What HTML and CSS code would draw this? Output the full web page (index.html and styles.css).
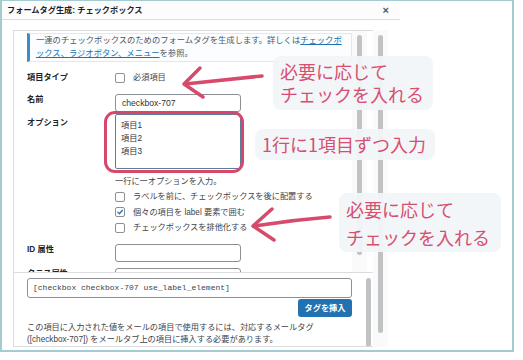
FILE: index.html
```html
<!DOCTYPE html>
<html lang="ja">
  <head>
    <meta charset="utf-8" />
    <title>フォームタグ生成: チェックボックス</title>
    <link rel="stylesheet" href="styles.css">
  </head>

  <body>
    <div class="page">
      <div class="frame">
        <!-- Dialog -->
        <div class="dialog">
          <div class="dialog-head">
            <span class="dialog-title">フォームタグ生成: チェックボックス</span>
            <span class="dialog-close">×</span>
          </div>
          <div class="dialog-body">
            <div class="panel">
              <div class="panel-main">
                <div class="panel-content">
                  <div class="notice">一連のチェックボックスのためのフォームタグを生成します。詳しくは<a href="#">チェックボックス、ラジオボタン、メニュー</a>を参照。</div>

                  <div class="row row-type">
                    <div class="row-label">項目タイプ</div>
                    <div class="row-field">
                      <label class="check"><span class="box"></span>必須項目</label>
                    </div>
                  </div>

                  <div class="row row-name">
                    <div class="row-label">名前</div>
                    <div class="row-field"><div class="input">checkbox-707</div></div>
                  </div>

                  <div class="row row-options">
                    <div class="row-label">オプション</div>
                    <div class="row-field">
                      <div class="textarea-wrap">
                        <div class="textarea">項目1<br />項目2<br />項目3</div>
                        <div class="mark"></div>
                      </div>
                      <div class="hint">一行に一オプションを入力。</div>
                      <label class="check check-row"><span class="box"></span>ラベルを前に、チェックボックスを後に配置する</label>
                      <label class="check check-row"><span class="box checked"><svg viewBox="0 0 10 10" width="10" height="10"><path d="M2.2 5.2 L4.2 7.2 L7.9 2.8" fill="none" stroke="#2271b1" stroke-width="1.6" stroke-linecap="round" stroke-linejoin="round"/></svg></span>個々の項目を label 要素で囲む</label>
                      <label class="check check-row"><span class="box"></span>チェックボックスを排他化する</label>
                    </div>
                  </div>

                  <div class="row row-id">
                    <div class="row-label">ID 属性</div>
                    <div class="row-field"><div class="input"></div></div>
                  </div>

                  <div class="row row-class">
                    <div class="row-label">クラス属性</div>
                    <div class="row-field"><div class="input"></div></div>
                  </div>
                </div>
                <div class="track track-main"><span class="thumb"></span></div>
              </div>

              <!-- insert box -->
              <div class="insert-box">
                <div class="insert-content">
                  <div class="code">[checkbox checkbox-707 use_label_element]</div>
                  <div class="insert-actions"><button class="insert-button">タグを挿入</button></div>
                  <p class="insert-note">この項目に入力された値をメールの項目で使用するには、対応するメールタグ<br />([checkbox-707]) をメールタブ上の項目に挿入する必要があります。</p>
                </div>
                <div class="track track-insert"><span class="thumb"></span></div>
              </div>
            </div>
            <div class="track track-outer"><span class="thumb"></span></div>
          </div>
        </div>
      </div>

      <!-- annotations -->
      <svg class="arrows" width="523" height="360" viewBox="0 0 523 360">
        <g fill="none" stroke="#d64b6c" stroke-width="3.5" stroke-linecap="round" stroke-linejoin="round">
          <path d="M262 76 Q225 80 185 84" />
          <path d="M200 68 L184 84 L203 97" />
          <path d="M330 217 Q292 220 254 226" />
          <path d="M272 209 L253 226 L274 240" />
        </g>
      </svg>
      <div class="note note-1">必要に応じて<br />チェックを入れる</div>
      <div class="note note-2">1行に1項目ずつ入力</div>
      <div class="note note-3">必要に応じて<br />チェックを入れる</div>
    </div>
  </body>
</html>
```

FILE: styles.css
```css
body {
  margin: 0;
  background: #fff;
  color: #3c434a;
  font-family: "Liberation Sans", "Noto Sans CJK JP", sans-serif;
  font-size: 8.2px;
  line-height: 13px;
}
.page {
  position: relative;
  width: 523px;
  height: 360px;
  overflow: hidden;
}
.frame {
  width: 510px;
  height: 349px;
  border: 2px solid #a3ccd0;
  border-top-width: 1px;
  display: flex;
}

/* dialog */
.dialog {
  width: 398px;
}
.dialog-head {
  height: 18px;
  border-bottom: 1px solid #dcdcde;
  display: flex;
  align-items: center;
  justify-content: space-between;
  padding: 0 11px 0 5px;
  background: #fcfcfc;
}
.dialog-title {
  font-weight: bold;
  color: #1d2327;
}
.dialog-close {
  font-size: 11px;
  font-weight: bold;
  color: #50575e;
}
.dialog-body {
  display: flex;
  padding: 10px 0 0 11px;
}

/* panel */
.panel {
  width: 359px;
  height: 315px;
  border: 1px solid #dcdcde;
  border-right: none;
  display: flex;
  flex-direction: column;
}
.panel-main {
  height: 241px;
  display: flex;
  overflow: hidden;
}
.panel-content {
  width: 338px;
  padding-left: 13px;
  box-sizing: border-box;
  flex-shrink: 0;
}
.track {
  display: flex;
  justify-content: center;
  flex-shrink: 0;
}
.thumb {
  display: block;
  width: 5px;
  border-radius: 3px;
  background: #c1c2c4;
}
.track-main {
  width: 15px;
  background: #fafafa;
}
.track-main .thumb {
  margin-top: 4px;
  height: 220px;
}
.track-insert {
  width: 10px;
  margin-left: -2px;
}
.track-insert .thumb {
  margin-top: 5px;
  height: 69px;
}
.track-outer {
  width: 15px;
  background: #fafafa;
}
.track-outer .thumb {
  margin-top: 5px;
  height: 298px;
}

.notice {
  margin-top: 2px;
  height: 27px;
  border: 1px solid #e2e8ec;
  border-left: 3px solid #3b8fc6;
  padding: 0 2px 0 6px;
  background: #fbfdfe;
  color: #50575e;
  font-size: 8.3px;
}
.notice a {
  color: #2271b1;
}

/* form rows */
.row {
  display: flex;
  align-items: flex-start;
}
.row-label {
  width: 88px;
  flex-shrink: 0;
  font-weight: bold;
  color: #1d2327;
  line-height: 12px;
}
.row-field {
  flex: 1;
}
.row-type {
  margin-top: 9px;
}
.row-type .row-label {
  line-height: 13px;
}
.row-name {
  margin-top: 10px;
}
.row-options {
  margin-top: 2px;
}
.row-options .row-label {
  padding-top: 3px;
}
.row-id {
  margin-top: 8px;
}
.row-class {
  margin-top: 6px;
}
.input {
  width: 126px;
  height: 18px;
  box-sizing: border-box;
  border: 1px solid #8c8f94;
  border-radius: 3px;
  background: #fff;
  padding: 0 6px;
  line-height: 16px;
  font-size: 8.6px;
  color: #2c3338;
}
.textarea-wrap {
  position: relative;
  width: 126px;
}
.textarea {
  height: 55px;
  box-sizing: border-box;
  border: 1px solid #5f7c98;
  border-radius: 2px;
  padding: 4px 5px;
  color: #2c3338;
}
.mark {
  position: absolute;
  top: -3px;
  left: -11px;
  right: -3px;
  bottom: -4px;
  border: 3px solid #d5486b;
  border-radius: 11px;
}
.hint {
  margin-top: 6px;
}
.check {
  display: flex;
  align-items: center;
}
.check-row {
  line-height: 15.5px;
}
.hint + .check-row {
  margin-top: 1px;
}
.box {
  width: 10px;
  height: 10px;
  box-sizing: border-box;
  border: 1px solid #8c8f94;
  border-radius: 2px;
  background: #fff;
  margin-right: 8px;
  display: flex;
  align-items: center;
  justify-content: center;
}
.box svg {
  display: block;
}

/* insert box */
.insert-box {
  flex: 1;
  border-top: 1px solid #dcdcde;
  display: flex;
  overflow: hidden;
  background: #fff;
}
.insert-content {
  width: 351px;
  padding: 0 13px;
  box-sizing: border-box;
  flex-shrink: 0;
}
.code {
  margin-top: 5px;
  height: 20px;
  box-sizing: border-box;
  border: 1px solid #8c8f94;
  border-radius: 3px;
  padding: 0 5px;
  font-family: "Liberation Mono", monospace;
  font-size: 8px;
  line-height: 18px;
  color: #3c434a;
  background: #fff;
}
.insert-actions {
  display: flex;
  justify-content: flex-end;
  margin-top: 1px;
}
.insert-button {
  border: none;
  margin: 0;
  width: 54px;
  height: 18px;
  border-radius: 3px;
  background: #2271b1;
  color: #fff;
  font: inherit;
  font-weight: bold;
  padding: 0;
}
.insert-note {
  margin: 5px 0 0;
  line-height: 12px;
  white-space: nowrap;
}

/* annotations */
.arrows {
  position: absolute;
  top: 0;
  left: 0;
}
.note {
  position: absolute;
  box-sizing: border-box;
  border-radius: 8px;
  background: rgba(241, 246, 249, 0.95);
  color: #d84e6f;
  font-family: "Noto Sans CJK JP", sans-serif;
  font-size: 18px;
  line-height: 23px;
  padding: 4px 7px;
  white-space: nowrap;
}
.note-1 {
  left: 273px;
  top: 56px;
  width: 160px;
  height: 54px;
}
.note-2 {
  left: 255px;
  top: 129px;
  width: 180px;
  height: 31px;
}
.note-3 {
  left: 339px;
  top: 193px;
  width: 162px;
  height: 59px;
  line-height: 28px;
  padding-top: 2px;
}
```
